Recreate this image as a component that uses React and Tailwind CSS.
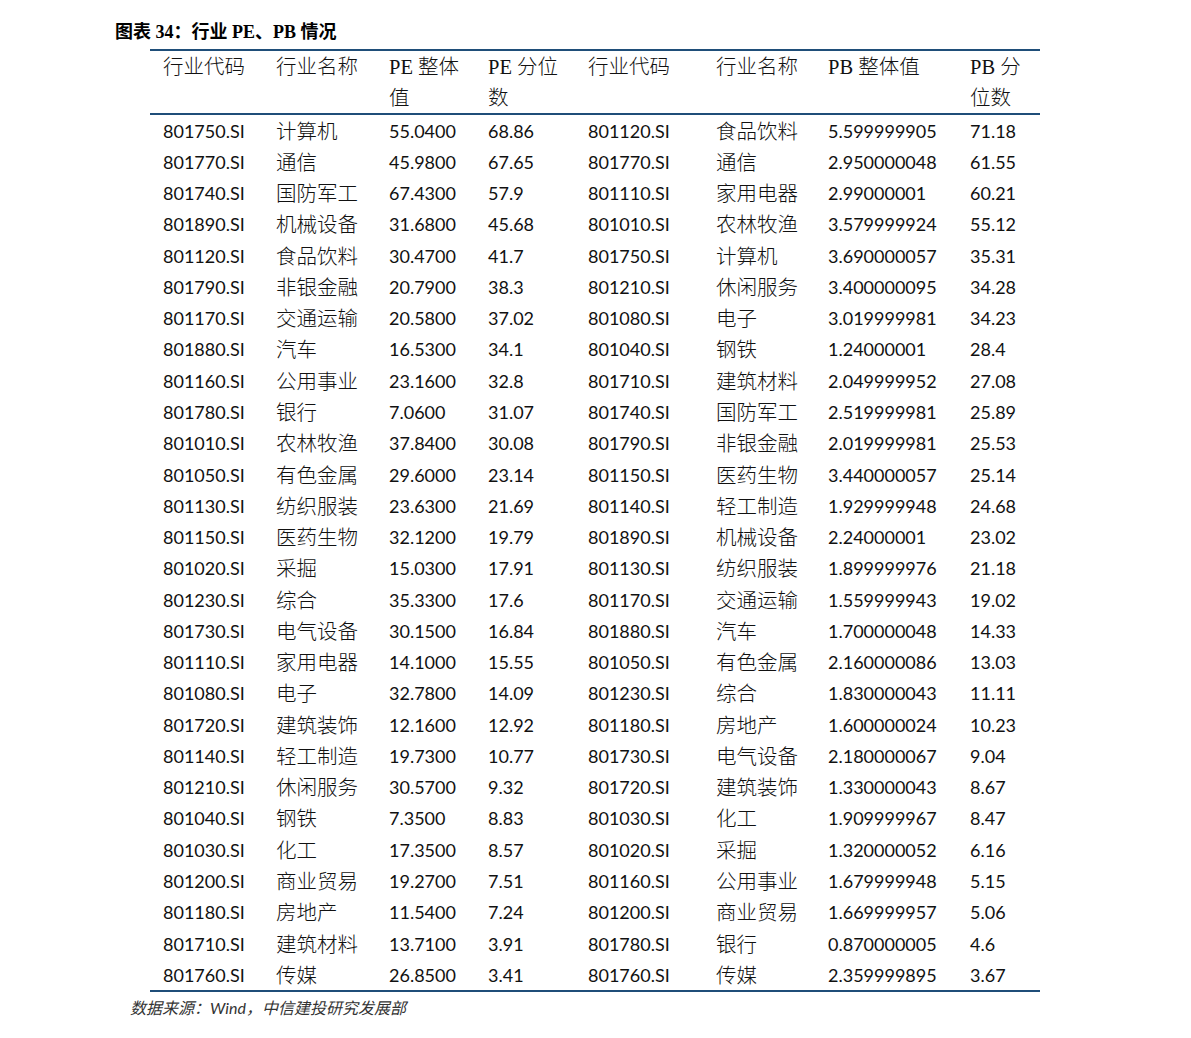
const pe = [
  ["801750.SI", "计算机", "55.0400", "68.86"],
  ["801770.SI", "通信", "45.9800", "67.65"],
  ["801740.SI", "国防军工", "67.4300", "57.9"],
  ["801890.SI", "机械设备", "31.6800", "45.68"],
  ["801120.SI", "食品饮料", "30.4700", "41.7"],
  ["801790.SI", "非银金融", "20.7900", "38.3"],
  ["801170.SI", "交通运输", "20.5800", "37.02"],
  ["801880.SI", "汽车", "16.5300", "34.1"],
  ["801160.SI", "公用事业", "23.1600", "32.8"],
  ["801780.SI", "银行", "7.0600", "31.07"],
  ["801010.SI", "农林牧渔", "37.8400", "30.08"],
  ["801050.SI", "有色金属", "29.6000", "23.14"],
  ["801130.SI", "纺织服装", "23.6300", "21.69"],
  ["801150.SI", "医药生物", "32.1200", "19.79"],
  ["801020.SI", "采掘", "15.0300", "17.91"],
  ["801230.SI", "综合", "35.3300", "17.6"],
  ["801730.SI", "电气设备", "30.1500", "16.84"],
  ["801110.SI", "家用电器", "14.1000", "15.55"],
  ["801080.SI", "电子", "32.7800", "14.09"],
  ["801720.SI", "建筑装饰", "12.1600", "12.92"],
  ["801140.SI", "轻工制造", "19.7300", "10.77"],
  ["801210.SI", "休闲服务", "30.5700", "9.32"],
  ["801040.SI", "钢铁", "7.3500", "8.83"],
  ["801030.SI", "化工", "17.3500", "8.57"],
  ["801200.SI", "商业贸易", "19.2700", "7.51"],
  ["801180.SI", "房地产", "11.5400", "7.24"],
  ["801710.SI", "建筑材料", "13.7100", "3.91"],
  ["801760.SI", "传媒", "26.8500", "3.41"],
];

const pb = [
  ["801120.SI", "食品饮料", "5.599999905", "71.18"],
  ["801770.SI", "通信", "2.950000048", "61.55"],
  ["801110.SI", "家用电器", "2.99000001", "60.21"],
  ["801010.SI", "农林牧渔", "3.579999924", "55.12"],
  ["801750.SI", "计算机", "3.690000057", "35.31"],
  ["801210.SI", "休闲服务", "3.400000095", "34.28"],
  ["801080.SI", "电子", "3.019999981", "34.23"],
  ["801040.SI", "钢铁", "1.24000001", "28.4"],
  ["801710.SI", "建筑材料", "2.049999952", "27.08"],
  ["801740.SI", "国防军工", "2.519999981", "25.89"],
  ["801790.SI", "非银金融", "2.019999981", "25.53"],
  ["801150.SI", "医药生物", "3.440000057", "25.14"],
  ["801140.SI", "轻工制造", "1.929999948", "24.68"],
  ["801890.SI", "机械设备", "2.24000001", "23.02"],
  ["801130.SI", "纺织服装", "1.899999976", "21.18"],
  ["801170.SI", "交通运输", "1.559999943", "19.02"],
  ["801880.SI", "汽车", "1.700000048", "14.33"],
  ["801050.SI", "有色金属", "2.160000086", "13.03"],
  ["801230.SI", "综合", "1.830000043", "11.11"],
  ["801180.SI", "房地产", "1.600000024", "10.23"],
  ["801730.SI", "电气设备", "2.180000067", "9.04"],
  ["801720.SI", "建筑装饰", "1.330000043", "8.67"],
  ["801030.SI", "化工", "1.909999967", "8.47"],
  ["801020.SI", "采掘", "1.320000052", "6.16"],
  ["801160.SI", "公用事业", "1.679999948", "5.15"],
  ["801200.SI", "商业贸易", "1.669999957", "5.06"],
  ["801780.SI", "银行", "0.870000005", "4.6"],
  ["801760.SI", "传媒", "2.359999895", "3.67"],
];

const widths = ["w-[113px]", "w-[113px]", "w-[99px]", "w-[100px]", "w-[128px]", "w-[112px]", "w-[142px]", "w-[83px]"];

const num = "font-['Lato',sans-serif] text-[18px]";
const cjk = "font-['Noto_Sans_CJK_SC',sans-serif] text-[20.5px] font-light pb-[2px]";
const head = "font-['Liberation_Serif','Noto_Sans_CJK_SC',serif] text-[20.5px] font-light";

const headers = [
  <>行业代码</>,
  <>行业名称</>,
  <>PE 整体<br />值</>,
  <>PE 分位<br />数</>,
  <>行业代码</>,
  <>行业名称</>,
  <>PB 整体值</>,
  <>PB 分<br />位数</>,
];

export default function App() {
  return (
    <div className="w-[1191px] h-[1038px] bg-white text-[#111]">
      <div className="pt-[22px] pl-[115px] leading-[20px] text-[18px] font-bold font-['Liberation_Serif','Noto_Sans_CJK_SC',serif] text-black">
        图表 34：行业 PE、PB 情况
      </div>

      <div className="ml-[150px] mt-[7px] w-[890px] border-t-[2.5px] border-b-[2.5px] border-[#1f4e79]">
        <div className="flex h-[64px] pt-[1px] border-b-[2.5px] border-[#1f4e79]">
          {headers.map((h, i) => (
            <div key={i} className={`${widths[i]} pl-[13px] leading-[31px] ${head}`}>
              {h}
            </div>
          ))}
        </div>

        {pe.map((r, i) => {
          const cells = [...r, ...pb[i]];
          return (
            <div key={i} className="flex h-[31.28px] items-center">
              {cells.map((c, j) => (
                <div key={j} className={`${widths[j]} pl-[13px] whitespace-nowrap leading-[26px] ${j % 4 === 1 ? cjk : num}`}>
                  {c}
                </div>
              ))}
            </div>
          );
        })}
      </div>

      <div className="mt-[6px] pl-[130px] leading-[20px] text-[16px] italic text-[#333] font-['Lato','Noto_Sans_CJK_SC',sans-serif]">
        数据来源：Wind，中信建投研究发展部
      </div>
    </div>
  );
}
